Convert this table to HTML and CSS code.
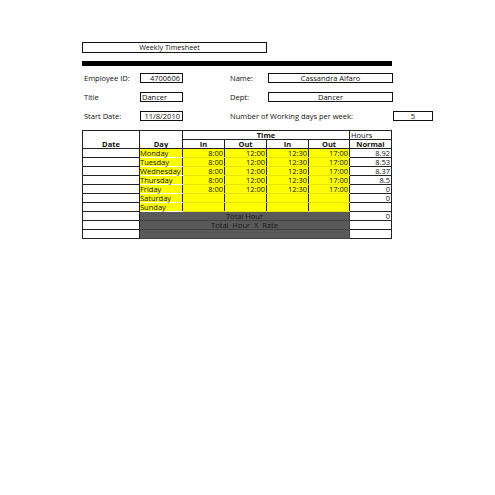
FILE: index.html
```html
<!DOCTYPE html>
<html>
<head>
<meta charset="utf-8">
<link rel="stylesheet" href="styles.css">
</head>
<body>
<div class="page">
  <div class="title-box">Weekly Timesheet</div>
  <div class="bar"></div>
  <div class="info">
    <div class="lbl">Employee ID:</div>
    <div class="box right">4700606</div>
    <div></div>
    <div class="lbl">Name:</div>
    <div class="box center">Cassandra Alfaro</div>
    <div></div>

    <div class="lbl">Title</div>
    <div class="box left">Dancer</div>
    <div></div>
    <div class="lbl">Dept:</div>
    <div class="box center">Dancer</div>
    <div></div>

    <div class="lbl">Start Date:</div>
    <div class="box right">11/8/2010</div>
    <div></div>
    <div class="lbl span2">Number of Working days per week:</div>
    <div class="box center">5</div>
  </div>

  <table class="ts">
    <colgroup>
      <col class="c-date"><col class="c-day"><col class="c-t"><col class="c-t"><col class="c-t"><col class="c-t2"><col class="c-h">
    </colgroup>
    <tr class="hr">
      <td class="bt"></td>
      <td class="bt"></td>
      <td colspan="4" class="b center">Time</td>
      <td class="left">Hours</td>
    </tr>
    <tr class="hr">
      <td class="b center nb-top">Date</td>
      <td class="b center nb-top">Day</td>
      <td class="b center">In</td>
      <td class="b center">Out</td>
      <td class="b center">In</td>
      <td class="b center">Out</td>
      <td class="b center">Normal</td>
    </tr>
    <tr><td></td><td class="day">Monday</td><td class="y">8:00</td><td class="y">12:00</td><td class="y">12:30</td><td class="y">17:00</td><td class="num">8.92</td></tr>
    <tr><td></td><td class="day">Tuesday</td><td class="y">8:00</td><td class="y">12:00</td><td class="y">12:30</td><td class="y">17:00</td><td class="num">8.53</td></tr>
    <tr><td></td><td class="day">Wednesday</td><td class="y">8:00</td><td class="y">12:00</td><td class="y">12:30</td><td class="y">17:00</td><td class="num">8.37</td></tr>
    <tr><td></td><td class="day">Thursday</td><td class="y">8:00</td><td class="y">12:00</td><td class="y">12:30</td><td class="y">17:00</td><td class="num">8.5</td></tr>
    <tr><td></td><td class="day">Friday</td><td class="y">8:00</td><td class="y">12:00</td><td class="y">12:30</td><td class="y">17:00</td><td class="num">0</td></tr>
    <tr><td></td><td class="day">Saturday</td><td class="y"></td><td class="y"></td><td class="y"></td><td class="y"></td><td class="num">0</td></tr>
    <tr><td></td><td class="day">Sunday</td><td class="y"></td><td class="y"></td><td class="y"></td><td class="y"></td><td class="num"></td></tr>
    <tr><td></td><td colspan="5" class="g">Total Hour</td><td class="num">0</td></tr>
    <tr><td></td><td colspan="5" class="g">Total&nbsp; Hour&nbsp; X&nbsp; Rate</td><td></td></tr>
    <tr><td></td><td colspan="5" class="g"></td><td></td></tr>
  </table>
</div>
</body>
</html>
```

FILE: styles.css
```css
html, body {
  margin: 0;
  padding: 0;
  background: #fff;
}
body {
  font-family: "Open Sans", "Liberation Sans", sans-serif;
  font-size: 7.5px;
  color: #111;
}
.page {
  padding: 42px 0 0 82px;
  width: 360px;
}
.title-box {
  width: 173px;
  height: 9px;
  border: 1px solid #111;
  padding-right: 10px;
  text-align: center;
  line-height: 9px;
  font-size: 7.2px;
}
.bar {
  width: 310px;
  height: 5px;
  background: #000;
  margin-top: 8px;
}
.info {
  display: grid;
  grid-template-columns: 58px 43px 45px 40px 125px 40px;
  grid-template-rows: 10px 10px 10px;
  row-gap: 9px;
  margin-top: 7px;
  align-items: center;
}
.info .lbl {
  padding-left: 2px;
  line-height: 10px;
}
.info .span2 {
  grid-column: 4 / span 2;
}
.box {
  border: 1px solid #111;
  height: 8px;
  line-height: 8px;
  padding: 0 2px;
  white-space: nowrap;
  overflow: hidden;
}
.box.right { text-align: right; }
.box.left { text-align: left; padding-left: 1px; }
.box.center { text-align: center; }

.ts {
  border-collapse: collapse;
  table-layout: fixed;
  width: 310px;
  margin-top: 9px;
}
.c-date { width: 57px; }
.c-day { width: 43px; }
.c-t { width: 42px; }
.c-t2 { width: 41px; }
.c-h { width: 42px; }
.ts td {
  border: 1px solid #222;
  height: 8px;
  line-height: 8px;
  padding: 0 1px;
  font-size: 7.5px;
  white-space: nowrap;
  overflow: hidden;
}
.ts td.bt { border-bottom: none; }
.ts td.nb-top { border-top: none; }
.ts .b { font-weight: bold; }
.ts .center { text-align: center; }
.ts .left { text-align: left; }
.ts td.day {
  background: #ffff00;
  border-top: 1px solid #fff;
  border-bottom: 1px solid #fff;
  text-align: left;
  padding-left: 0;
  overflow: visible;
}
.ts td.y {
  background: #ffff00;
  text-align: right;
  border-top: 1px solid #e6e600;
  border-bottom: 1px solid #e6e600;
}
.ts td.num { text-align: right; }
.ts td.g {
  background: #595959;
  color: #1a1a1a;
  text-align: center;
  border-color: #444;
}
```
